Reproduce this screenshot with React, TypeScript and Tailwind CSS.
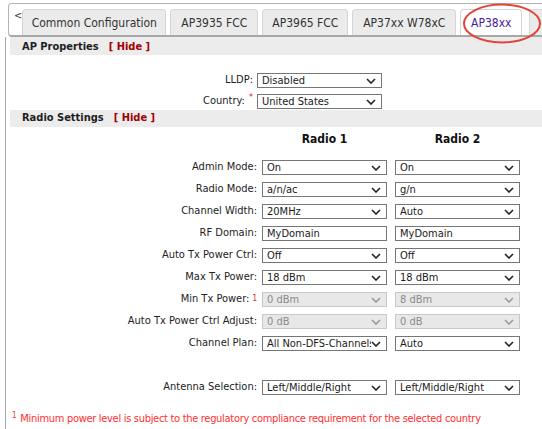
import React from "react";

const font = "font-['DejaVu_Sans_Condensed','DejaVu_Sans',sans-serif]";

function Chevron({ disabled }: { disabled?: boolean }) {
  return (
    <svg width="10" height="6" viewBox="0 0 10 6" className="shrink-0">
      <path
        d="M1 1 L5 5 L9 1"
        fill="none"
        stroke={disabled ? "#9a9a9a" : "#222"}
        strokeWidth="1.6"
      />
    </svg>
  );
}

function Select({ value, disabled }: { value: string; disabled?: boolean }) {
  return (
    <div
      className={`w-[125px] h-[15px] flex items-center justify-between pl-[4px] pr-[5px] border overflow-hidden ${
        disabled
          ? "bg-[#e8e8e8] border-[#c8c8c8] text-[#8a8a8a]"
          : "bg-white border-[#767676] text-[#1a1a1a]"
      }`}
    >
      <span className="whitespace-nowrap overflow-hidden text-[11px] leading-none">
        {value}
      </span>
      <Chevron disabled={disabled} />
    </div>
  );
}

function TextBox({ value }: { value: string }) {
  return (
    <div className="w-[125px] h-[15px] flex items-center pl-[4px] border border-[#767676] bg-white text-[11px] leading-none text-[#1a1a1a]">
      {value}
    </div>
  );
}

function Label({ text, note }: { text: string; note?: string }) {
  return (
    <div className="w-[252px] text-right text-[11px] text-[#222] whitespace-nowrap pr-[1px]">
      {text}
      {note && (
        <sup className="text-[#e02020] text-[8px] ml-[3px] relative -top-[1px]">{note}</sup>
      )}
    </div>
  );
}

type Row = {
  label: string;
  note?: string;
  kind: "select" | "text";
  a: string;
  b: string;
  disabled?: boolean;
};

const rows: Row[] = [
  { label: "Admin Mode:", kind: "select", a: "On", b: "On" },
  { label: "Radio Mode:", kind: "select", a: "a/n/ac", b: "g/n" },
  { label: "Channel Width:", kind: "select", a: "20MHz", b: "Auto" },
  { label: "RF Domain:", kind: "text", a: "MyDomain", b: "MyDomain" },
  { label: "Auto Tx Power Ctrl:", kind: "select", a: "Off", b: "Off" },
  { label: "Max Tx Power:", kind: "select", a: "18 dBm", b: "18 dBm" },
  { label: "Min Tx Power:", note: "1", kind: "select", a: "0 dBm", b: "8 dBm", disabled: true },
  { label: "Auto Tx Power Ctrl Adjust:", kind: "select", a: "0 dB", b: "0 dB", disabled: true },
  { label: "Channel Plan:", kind: "select", a: "All Non-DFS-Channels", b: "Auto" },
];

const tabs = [
  { name: "Common Configuration", w: "w-[144px]" },
  { name: "AP3935 FCC", w: "w-[88px]" },
  { name: "AP3965 FCC", w: "w-[86px]" },
  { name: "AP37xx W78xC", w: "w-[104px]" },
];

function SectionHeader({ title, h }: { title: string; h: string }) {
  return (
    <div className={`${h} ml-[4px] bg-[#ececec] flex items-center pl-[12px] text-[11px] font-bold`}>
      <span className="text-[#1e1e1e]">{title}</span>
      <span className="ml-[10px] text-[#a00000]">[ Hide ]</span>
    </div>
  );
}

export default function App() {
  return (
    <div className={`relative w-[542px] h-[429px] overflow-hidden bg-white ${font}`}>
      {/* tab strip */}
      <div className="mt-[3px] ml-[8px] h-[34px] border-t border-l border-b-2 border-[#b4b4b4] border-b-[#a8a8a8] rounded-tl-[4px] rounded-bl-[4px] flex items-end overflow-hidden">
        <div className="w-[20px] self-stretch pl-[5px] pt-[6px] text-[11px] text-[#333] leading-none">
          &lt;
        </div>
        <div className="flex items-end gap-[4px]">
          {tabs.map((t) => (
            <div
              key={t.name}
              className={`${t.w} h-[26px] shrink-0 flex items-center justify-center rounded-t-[4px] border border-b-0 border-[#d6d6d6] bg-[#ebebeb] text-[12px] text-[#333]`}
            >
              {t.name}
            </div>
          ))}
          <div className="w-[62px] h-[26px] shrink-0 flex items-center justify-center rounded-t-[4px] border border-b-0 border-[#d6d6d6] bg-white text-[12px] text-[#4b1a9e]">
            AP38xx
          </div>
          <div className="w-[90px] h-[26px] shrink-0 rounded-t-[4px] border border-b-0 border-[#d6d6d6] bg-[#ebebeb] ml-[3px]" />
        </div>
      </div>

      {/* content frame */}
      <div className="ml-[5px] border-l border-[#a8a8a8] h-[392px]">
        <SectionHeader title="AP Properties" h="h-[18px] pt-[2px]" />

        <div className="pt-[18px] flex flex-col gap-[6px]">
          <div className="flex items-center h-[15px]">
            <div className="w-[247px] text-right text-[11px] text-[#222]">LLDP:</div>
            <div className="ml-[4px]">
              <Select value="Disabled" />
            </div>
          </div>
          <div className="flex items-center h-[15px]">
            <div className="w-[247px] text-right text-[11px] text-[#222] whitespace-nowrap">
              Country:
              <sup className="text-[#e02020] text-[9px] ml-[4px]">*</sup>
            </div>
            <div className="ml-[4px]">
              <Select value="United States" />
            </div>
          </div>
        </div>

        <div className="mt-[1px]">
          <SectionHeader title="Radio Settings" h="h-[17px]" />
        </div>

        {/* radio column titles */}
        <div className="flex h-[24px] items-center text-[12px] font-bold text-[#111]">
          <div className="w-[256px]" />
          <div className="w-[125px] text-center">Radio 1</div>
          <div className="w-[8px]" />
          <div className="w-[125px] text-center">Radio 2</div>
        </div>

        <div className="mt-[9px] flex flex-col gap-[7px]">
          {rows.map((r) => (
            <div key={r.label} className="flex items-center h-[15px]">
              <Label text={r.label} note={r.note} />
              <div className="flex gap-[8px] ml-[4px]">
                {r.kind === "text" ? (
                  <>
                    <TextBox value={r.a} />
                    <TextBox value={r.b} />
                  </>
                ) : (
                  <>
                    <Select value={r.a} disabled={r.disabled} />
                    <Select value={r.b} disabled={r.disabled} />
                  </>
                )}
              </div>
            </div>
          ))}
        </div>

        <div className="mt-[29px] flex items-center h-[15px]">
          <Label text="Antenna Selection:" />
          <div className="flex gap-[8px] ml-[4px]">
            <Select value="Left/Middle/Right" />
            <Select value="Left/Middle/Right" />
          </div>
        </div>

        <div className="mt-[16px] pl-[6px] text-[11px] tracking-[-0.3px] leading-[15px] text-[#ff3030] whitespace-nowrap">
          <sup className="text-[8px] mr-[4px]">1</sup>
          Minimum power level is subject to the regulatory compliance requirement for the selected country
        </div>
      </div>

      {/* red annotation circle */}
      <svg
        className="absolute left-[461px] top-[2px]"
        width="81"
        height="43"
        viewBox="0 0 81 43"
      >
        <ellipse cx="41" cy="21.5" rx="38" ry="19" fill="none" stroke="#e0453c" strokeWidth="2" />
      </svg>
    </div>
  );
}
